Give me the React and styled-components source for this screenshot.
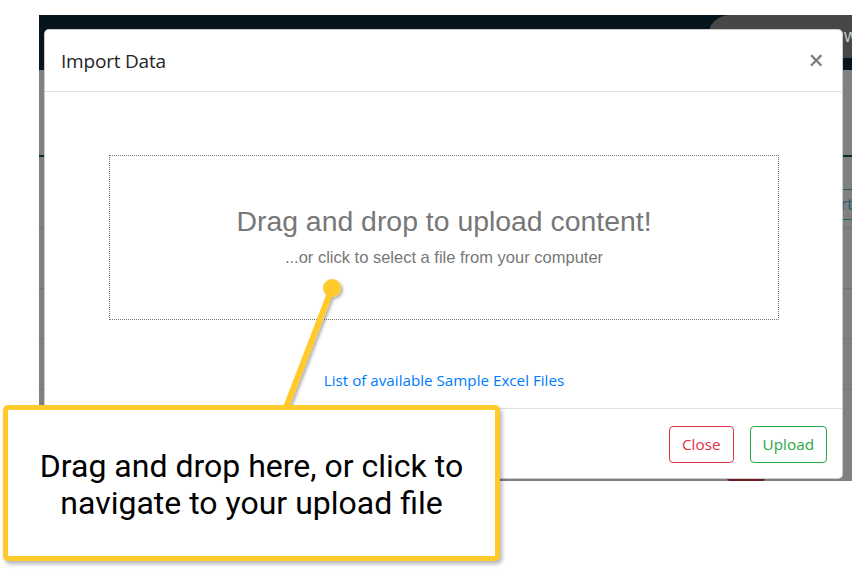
import React from "react";
import styled, { createGlobalStyle } from "styled-components";

const Global = createGlobalStyle`
  html, body { margin: 0; padding: 0; background: #ffffff; }
  body { font-family: "Open Sans", "Noto Sans", sans-serif; }
  * { box-sizing: border-box; }
`;

const Page = styled.div`
  position: relative;
  width: 852px;
  height: 578px;
  padding: 15px 0 0 39px;
  overflow: hidden;
`;

const Backdrop = styled.div`
  position: relative;
  width: 813px;
  height: 466px;
  background: #808080;
  overflow: hidden;
  display: flex;
  flex-direction: column;
`;

const NavBar = styled.div`
  height: 55px;
  flex: none;
  background: #06151d;
  display: flex;
  justify-content: flex-end;
  align-items: flex-start;
`;

const NavPill = styled.div`
  width: 150px;
  height: 43px;
  margin-right: -6px;
  background: #474747;
  border-radius: 34px 0 0 34px;
  display: flex;
  align-items: center;
  padding-left: 136px;
  color: #c9c9c9;
  font-family: "Liberation Sans", Arial, sans-serif;
  font-size: 18px;
`;

const HeaderBand = styled.div`
  height: 87px;
  flex: none;
  border-bottom: 2px solid #0e2a38;
`;

const Row = styled.div`
  height: ${(p) => p.$h}px;
  flex: none;
  border-bottom: 1px solid #747474;
  display: flex;
  justify-content: flex-end;
  align-items: flex-end;
  padding-bottom: ${(p) => p.$pb || 0}px;
`;

const GhostButton = styled.div`
  height: 31px;
  padding: 0 8px;
  margin-right: -10px;
  border: 1px solid #1d5e68;
  border-radius: 3px;
  color: #1d5e68;
  font-family: "Open Sans", sans-serif;
  font-size: 16px;
  line-height: 29px;
`;

const BottomArea = styled.div`
  flex: 1;
  display: flex;
  align-items: flex-end;
  justify-content: flex-end;
  padding-right: 87px;
`;

const RedStub = styled.div`
  width: 38px;
  height: 3px;
  background: #6e1a22;
  border-radius: 0 0 3px 3px;
`;

const Modal = styled.div`
  position: absolute;
  left: 5px;
  top: 14px;
  width: 799px;
  height: 450px;
  background: #ffffff;
  border: 1px solid rgba(0, 0, 0, 0.2);
  border-radius: 5px;
  display: flex;
  flex-direction: column;
  color: #212529;
`;

const ModalHeader = styled.div`
  height: 62px;
  flex: none;
  padding: 0 16px;
  border-bottom: 1px solid #dee2e6;
  display: flex;
  align-items: center;
  justify-content: space-between;
`;

const Title = styled.h5`
  margin: 0;
  font-size: 19px;
  font-weight: 400;
  letter-spacing: -0.2px;
  line-height: 30px;
`;

const CloseX = styled.button`
  border: 0;
  background: transparent;
  padding: 0;
  margin: 0 2px 2px 0;
  font-family: "Open Sans", sans-serif;
  font-size: 27px;
  font-weight: 600;
  line-height: 1;
  color: #000;
  opacity: 0.5;
  cursor: pointer;
`;

const ModalBody = styled.div`
  flex: 1;
  padding: 63px 63px 16px 64px;
  display: flex;
  flex-direction: column;
  align-items: center;
`;

const DropZone = styled.div`
  width: 100%;
  height: 165px;
  border: 1px dotted #777;
  display: flex;
  flex-direction: column;
  align-items: center;
  justify-content: center;
  gap: 11px;
  padding-bottom: 4px;
  font-family: "Liberation Sans", Arial, sans-serif;
  color: #777;
`;

const DropTitle = styled.div`
  font-size: 28.4px;
  line-height: 32px;
`;

const DropSub = styled.div`
  font-size: 16.5px;
  line-height: 19px;
`;

const SampleLink = styled.a`
  margin-top: 48px;
  font-size: 15.2px;
  line-height: 24px;
  color: #007bff;
  text-decoration: none;
`;

const ModalFooter = styled.div`
  height: 71px;
  flex: none;
  border-top: 1px solid #dee2e6;
  padding: 0 15px;
  display: flex;
  align-items: center;
  justify-content: flex-end;
  gap: 16px;
`;

const OutlineButton = styled.button`
  height: 37px;
  padding: 0 12px;
  background: #fff;
  border: 1px solid ${(p) => p.$c};
  border-radius: 4px;
  color: ${(p) => p.$c};
  font-family: "Open Sans", sans-serif;
  font-size: 15.3px;
  line-height: 24px;
  cursor: pointer;
`;

const Pointer = styled.svg`
  position: absolute;
  left: 270px;
  top: 270px;
  width: 90px;
  height: 145px;
  overflow: visible;
`;

const Callout = styled.div`
  position: absolute;
  left: 3px;
  top: 405px;
  width: 497px;
  height: 156px;
  background: #ffffff;
  border: 5px solid #ffca2c;
  border-radius: 5px;
  box-shadow: 2px 3px 4px rgba(0, 0, 0, 0.3);
  display: flex;
  align-items: center;
  justify-content: center;
  text-align: center;
  font-family: Roboto, "Liberation Sans", sans-serif;
  font-size: 32px;
  line-height: 37px;
  color: #000;
  padding-top: 4px;
`;

export default function App() {
  return (
    <>
      <Global />
      <Page>
        <Backdrop>
          <NavBar>
            <NavPill>w</NavPill>
          </NavBar>
          <HeaderBand />
          <Row $h={72} $pb={8}>
            <GhostButton>Import</GhostButton>
          </Row>
          <Row $h={60} />
          <Row $h={50} />
          <Row $h={51} />
          <BottomArea>
            <RedStub />
          </BottomArea>

          <Modal>
            <ModalHeader>
              <Title>Import Data</Title>
              <CloseX aria-label="Close">×</CloseX>
            </ModalHeader>
            <ModalBody>
              <DropZone>
                <DropTitle>Drag and drop to upload content!</DropTitle>
                <DropSub>...or click to select a file from your computer</DropSub>
              </DropZone>
              <SampleLink href="#">List of available Sample Excel Files</SampleLink>
            </ModalBody>
            <ModalFooter>
              <OutlineButton $c="#dc3545">Close</OutlineButton>
              <OutlineButton $c="#28a745">Upload</OutlineButton>
            </ModalFooter>
          </Modal>
        </Backdrop>

        <Pointer viewBox="0 0 90 145">
          <defs>
            <filter id="ps" x="-50%" y="-50%" width="200%" height="200%">
              <feDropShadow dx="2" dy="2" stdDeviation="1.5" floodColor="#000" floodOpacity="0.3" />
            </filter>
          </defs>
          <g filter="url(#ps)" fill="#ffca2c" stroke="#ffca2c">
            <line x1="62" y1="18" x2="15" y2="140" strokeWidth="6" />
            <circle cx="62" cy="18" r="9" stroke="none" />
          </g>
        </Pointer>

        <Callout>
          Drag and drop here, or click to
          <br />
          navigate to your upload file
        </Callout>
      </Page>
    </>
  );
}
